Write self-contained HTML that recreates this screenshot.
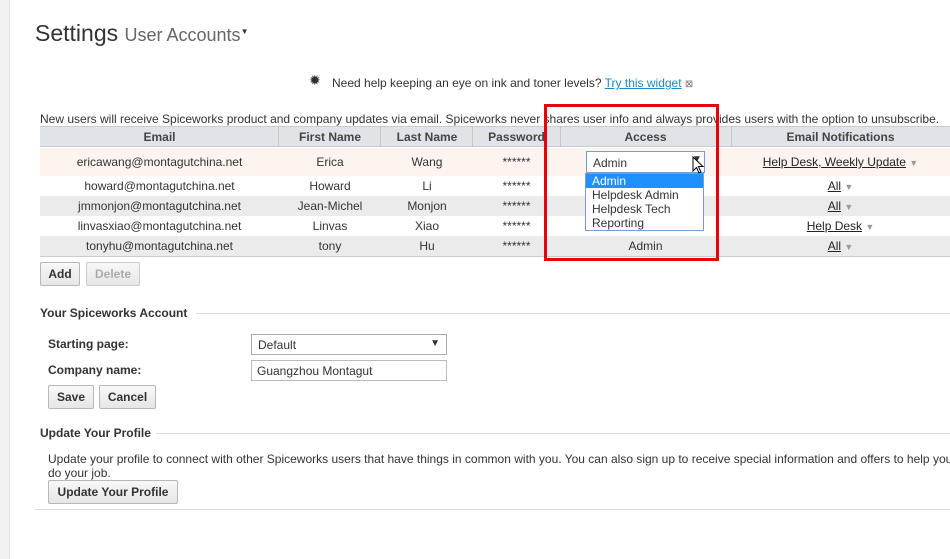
<!DOCTYPE html>
<html><head><meta charset="utf-8"><style>
*{margin:0;padding:0;box-sizing:border-box}
body{width:950px;height:559px;background:#fff;font-family:"Liberation Sans",Arial,sans-serif;font-size:12px;color:#333;position:relative;overflow:hidden}
.a{position:absolute;white-space:nowrap}
.strip{left:0;top:0;width:10px;height:559px;background:#f2f2f2;border-right:1px solid #e4e4e4}
.btn{position:absolute;border:1px solid #b8b8b8;background:linear-gradient(#f8f8f8,#e6e6e6);border-radius:2px;font-weight:bold;font-size:12px;text-align:center;color:#333}
.row{position:absolute;left:40px;width:910px}
.row span{position:absolute;text-align:center;top:0}
u{text-decoration:underline}
.hr{position:absolute;height:1px;background:#ddd}
.ar{position:static!important;color:#999;font-size:9px}
</style></head><body>
<div class="a strip"></div>
<div class="a" style="left:35px;top:20px;font-size:23px;color:#333">Settings <span style="font-size:18px;color:#666">User Accounts</span><span style="font-size:8px;color:#333;vertical-align:7px">▼</span></div>
<div class="a" style="left:309px;top:72px;font-size:14px">✹</div>
<div class="a" style="left:332px;top:76px">Need help keeping an eye on ink and toner levels? <u style="color:#1a8ac6">Try this widget</u> <span style="font-size:10px;color:#777">⊠</span></div>
<div class="a" style="left:40px;top:112px">New users will receive Spiceworks product and company updates via email. Spiceworks never shares user info and always provides users with the option to unsubscribe.</div>
<div class="a" style="left:40px;top:126px;width:910px;height:21px;background:#e0e3e8;border-top:1px solid #ccc;border-bottom:1px solid #c8ccd2"></div>
<div class="row" style="top:130px;font-weight:bold;color:#444">
<span style="left:0;width:239px">Email</span><span style="left:239px;width:102px">First Name</span><span style="left:341px;width:92px">Last Name</span><span style="left:433px;width:87px">Password</span><span style="left:520px;width:171px">Access</span><span style="left:691px;width:219px">Email Notifications</span></div>
<div class="a" style="left:278px;top:127px;width:1px;height:20px;background:#c8c8c8"></div>
<div class="a" style="left:380px;top:127px;width:1px;height:20px;background:#c8c8c8"></div>
<div class="a" style="left:472px;top:127px;width:1px;height:20px;background:#c8c8c8"></div>
<div class="a" style="left:560px;top:127px;width:1px;height:20px;background:#c8c8c8"></div>
<div class="a" style="left:731px;top:127px;width:1px;height:20px;background:#c8c8c8"></div>
<div class="a" style="left:40px;top:148px;width:910px;height:28px;background:#fdf4f0"></div>
<div class="a" style="left:40px;top:196px;width:910px;height:20px;background:#ebebeb"></div>
<div class="a" style="left:40px;top:236px;width:910px;height:20px;background:#ebebeb"></div>
<div class="a" style="left:40px;top:256px;width:910px;height:1px;background:#ccc"></div>
<div class="row" style="top:155px"><span style="left:0;width:239px">ericawang@montagutchina.net</span><span style="left:239px;width:102px">Erica</span><span style="left:341px;width:92px">Wang</span><span style="left:433px;width:87px">******</span><span style="left:691px;width:219px"><u style="color:#222">Help Desk, Weekly Update</u> <span class="ar">▼</span></span></div>
<div class="row" style="top:179px"><span style="left:0;width:239px">howard@montagutchina.net</span><span style="left:239px;width:102px">Howard</span><span style="left:341px;width:92px">Li</span><span style="left:433px;width:87px">******</span><span style="left:691px;width:219px"><u style="color:#222">All</u> <span class="ar">▼</span></span></div>
<div class="row" style="top:199px"><span style="left:0;width:239px">jmmonjon@montagutchina.net</span><span style="left:239px;width:102px">Jean-Michel</span><span style="left:341px;width:92px">Monjon</span><span style="left:433px;width:87px">******</span><span style="left:691px;width:219px"><u style="color:#222">All</u> <span class="ar">▼</span></span></div>
<div class="row" style="top:219px"><span style="left:0;width:239px">linvasxiao@montagutchina.net</span><span style="left:239px;width:102px">Linvas</span><span style="left:341px;width:92px">Xiao</span><span style="left:433px;width:87px">******</span><span style="left:691px;width:219px"><u style="color:#222">Help Desk</u> <span class="ar">▼</span></span></div>
<div class="row" style="top:239px"><span style="left:0;width:239px">tonyhu@montagutchina.net</span><span style="left:239px;width:102px">tony</span><span style="left:341px;width:92px">Hu</span><span style="left:433px;width:87px">******</span><span style="left:520px;width:171px">Admin</span><span style="left:691px;width:219px"><u style="color:#222">All</u> <span class="ar">▼</span></span></div>
<div class="a" style="left:586px;top:151px;width:119px;height:22px;border:1px solid #7a9cd3;background:#fff;padding:4px 0 0 6px">Admin</div>
<div class="a" style="left:692px;top:154px;font-size:10px">▼</div>
<div class="a" style="left:585px;top:173px;width:119px;height:58px;border:1px solid #7a9cd3;background:#fff;line-height:14px">
<div style="background:#1e90ff;color:#fff;padding-left:6px">Admin</div>
<div style="padding-left:6px">Helpdesk Admin</div><div style="padding-left:6px">Helpdesk Tech</div><div style="padding-left:6px">Reporting</div></div>
<svg class="a" style="left:692px;top:156px" width="14" height="20"><path d="M1 1 L1 15 L4.5 11.5 L7 17 L9 16 L6.5 10.5 L11 10.5 Z" fill="#fff" stroke="#000" stroke-width="1"/></svg>
<div class="a" style="left:544px;top:104px;width:175px;height:157px;border:3px solid #e8000b"></div>
<div class="btn" style="left:40px;top:262px;width:40px;height:24px;line-height:22px">Add</div>
<div class="btn" style="left:86px;top:262px;width:54px;height:24px;line-height:22px;color:#aaa;border-color:#ccc">Delete</div>
<div class="a" style="left:40px;top:306px;font-weight:bold">Your Spiceworks Account</div>
<div class="hr" style="left:196px;top:313px;width:754px"></div>
<div class="a" style="left:48px;top:337px;font-weight:bold">Starting page:</div>
<div class="a" style="left:251px;top:334px;width:196px;height:21px;border:1px solid #aaa;padding:3px 0 0 6px">Default<span style="position:absolute;right:6px;top:3px;font-size:10px">▼</span></div>
<div class="a" style="left:48px;top:363px;font-weight:bold">Company name:</div>
<div class="a" style="left:251px;top:360px;width:196px;height:21px;border:1px solid #bbb;padding:3px 0 0 5px">Guangzhou Montagut</div>
<div class="btn" style="left:48px;top:385px;width:46px;height:24px;line-height:22px">Save</div>
<div class="btn" style="left:99px;top:385px;width:57px;height:24px;line-height:22px">Cancel</div>
<div class="a" style="left:40px;top:426px;font-weight:bold">Update Your Profile</div>
<div class="hr" style="left:156px;top:433px;width:794px"></div>
<div class="a" style="left:48px;top:452px;line-height:14px">Update your profile to connect with other Spiceworks users that have things in common with you. You can also sign up to receive special information and offers to help you<br>do your job.</div>
<div class="btn" style="left:48px;top:480px;width:130px;height:24px;line-height:22px">Update Your Profile</div>
<div class="hr" style="left:35px;top:509px;width:915px"></div>
</body></html>
